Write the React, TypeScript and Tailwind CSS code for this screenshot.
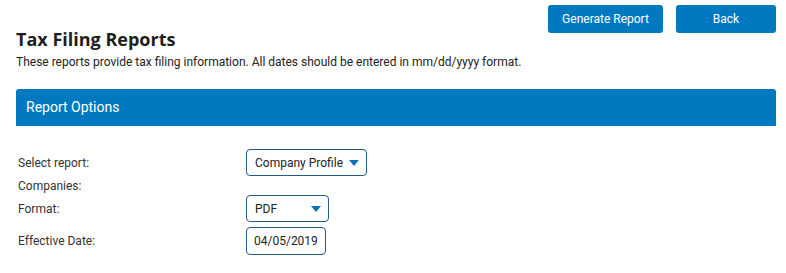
const blue = 'bg-[#0079c1]';

function Caret() {
  return (
    <svg width="10" height="6" viewBox="0 0 10 6" className="shrink-0">
      <path d="M0 0 H10 L5 6 Z" fill="#0a72bb" />
    </svg>
  );
}

function Dropdown({ value, width }: { value: string; width: string }) {
  return (
    <div className={`${width} h-full flex items-center justify-between gap-[6px] pl-[8px] pr-[7px] border border-[#235c86] rounded-[4px] bg-white text-[12px] text-[#222] whitespace-nowrap`}>
      <span>{value}</span>
      <Caret />
    </div>
  );
}

export default function App() {
  return (
    <div className="min-h-screen bg-white pl-[16px] pr-[10px] font-['Roboto','Liberation_Sans',sans-serif] text-[#222]">
      {/* top actions */}
      <div className="flex justify-end gap-[13px] pt-[5px]">
        <button className={`${blue} text-white text-[12px] w-[115px] h-[28px] rounded-[3px]`}>Generate Report</button>
        <button className={`${blue} text-white text-[12px] w-[100px] h-[28px] rounded-[3px]`}>Back</button>
      </div>

      <h1 className="mt-[-5px] text-[18px] leading-[22px] font-bold text-[#1e1e1e] font-['Open_Sans','Liberation_Sans',sans-serif]">
        Tax Filing Reports
      </h1>
      <p className="mt-[4px] text-[12px] leading-[16px] text-[#222]">
        These reports provide tax filing information. All dates should be entered in mm/dd/yyyy format.
      </p>

      {/* options panel */}
      <div className="mt-[19px]">
        <div className={`${blue} h-[37px] rounded-t-[3px] flex items-center pl-[10px] text-white text-[14px]`}>
          Report Options
        </div>
        <div className="pt-[23px] text-[12px] text-[#333]">
          <div className="flex h-[27px] items-center">
            <div className="w-[230px] pl-[2px]">Select report:</div>
            <div className="h-full"><Dropdown value="Company Profile" width="w-[121px]" /></div>
          </div>
          <div className="flex h-[19px] items-center">
            <div className="w-[230px] pl-[2px]">Companies:</div>
          </div>
          <div className="flex h-[27px] items-center">
            <div className="w-[230px] pl-[2px]">Format:</div>
            <div className="h-full"><Dropdown value="PDF" width="w-[83px]" /></div>
          </div>
          <div className="flex h-[28px] items-center mt-[5px]">
            <div className="w-[230px] pl-[2px]">Effective Date:</div>
            <input
              readOnly
              value="04/05/2019"
              className="w-[80px] h-full pl-[7px] border border-[#235c86] rounded-[4px] text-[12px] text-[#222] outline-none"
            />
          </div>
        </div>
      </div>
    </div>
  );
}
